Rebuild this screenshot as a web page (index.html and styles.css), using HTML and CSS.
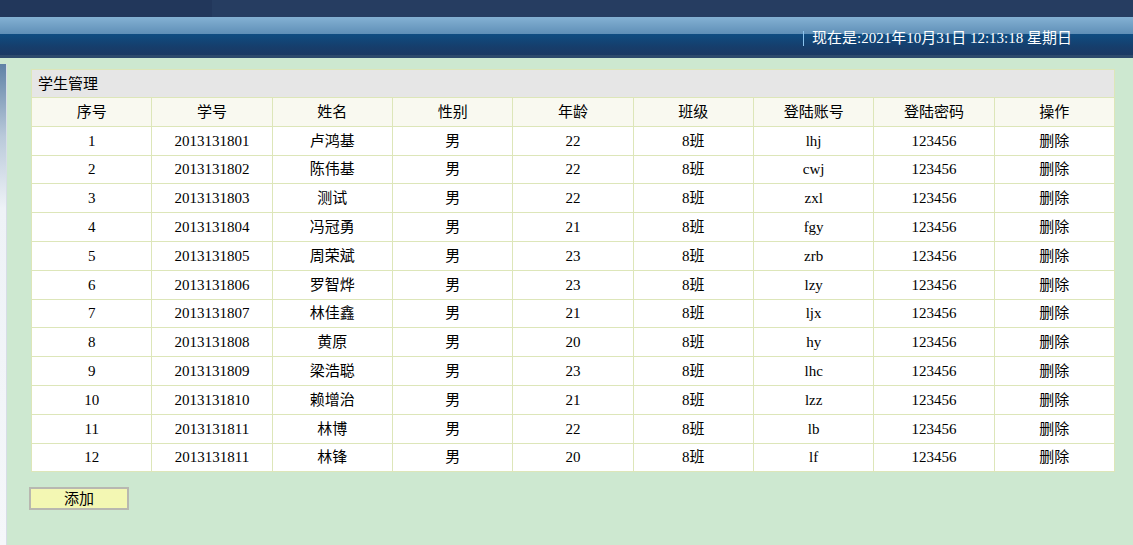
FILE: index.html
```html
<!DOCTYPE html>
<html lang="zh">
<head>
<meta charset="utf-8">
<title>学生管理</title>
<link rel="stylesheet" href="styles.css">
</head>
<body>
<div class="top">
  <div class="top-band"><div class="top-left"></div></div>
  <div class="nav">
    <div class="nav-light"></div>
    <div class="nav-dark">
      <span class="clock"><span class="sep"></span>现在是:2021年10月31日 12:13:18 星期日</span>
    </div>
    <div class="nav-edge"></div>
  </div>
</div>
<div class="main">
  <div class="strip"></div>
  <div class="content">
    <table class="grid">
      <tr class="title-row"><td colspan="9">学生管理</td></tr>
      <tr class="head-row">
        <td>序号</td><td>学号</td><td>姓名</td><td>性别</td><td>年龄</td><td>班级</td><td>登陆账号</td><td>登陆密码</td><td>操作</td>
      </tr>
      <tr><td>1</td><td>2013131801</td><td>卢鸿基</td><td>男</td><td>22</td><td>8班</td><td>lhj</td><td>123456</td><td>删除</td></tr>
      <tr><td>2</td><td>2013131802</td><td>陈伟基</td><td>男</td><td>22</td><td>8班</td><td>cwj</td><td>123456</td><td>删除</td></tr>
      <tr><td>3</td><td>2013131803</td><td>测试</td><td>男</td><td>22</td><td>8班</td><td>zxl</td><td>123456</td><td>删除</td></tr>
      <tr><td>4</td><td>2013131804</td><td>冯冠勇</td><td>男</td><td>21</td><td>8班</td><td>fgy</td><td>123456</td><td>删除</td></tr>
      <tr><td>5</td><td>2013131805</td><td>周荣斌</td><td>男</td><td>23</td><td>8班</td><td>zrb</td><td>123456</td><td>删除</td></tr>
      <tr><td>6</td><td>2013131806</td><td>罗智烨</td><td>男</td><td>23</td><td>8班</td><td>lzy</td><td>123456</td><td>删除</td></tr>
      <tr><td>7</td><td>2013131807</td><td>林佳鑫</td><td>男</td><td>21</td><td>8班</td><td>ljx</td><td>123456</td><td>删除</td></tr>
      <tr><td>8</td><td>2013131808</td><td>黄原</td><td>男</td><td>20</td><td>8班</td><td>hy</td><td>123456</td><td>删除</td></tr>
      <tr><td>9</td><td>2013131809</td><td>梁浩聪</td><td>男</td><td>23</td><td>8班</td><td>lhc</td><td>123456</td><td>删除</td></tr>
      <tr><td>10</td><td>2013131810</td><td>赖增治</td><td>男</td><td>21</td><td>8班</td><td>lzz</td><td>123456</td><td>删除</td></tr>
      <tr><td>11</td><td>2013131811</td><td>林博</td><td>男</td><td>22</td><td>8班</td><td>lb</td><td>123456</td><td>删除</td></tr>
      <tr><td>12</td><td>2013131811</td><td>林锋</td><td>男</td><td>20</td><td>8班</td><td>lf</td><td>123456</td><td>删除</td></tr>
    </table>
    <button class="add-btn" type="button">添加</button>
  </div>
</div>
</body>
</html>
```

FILE: styles.css
```css
html, body {
  margin: 0;
  padding: 0;
}
body {
  width: 1133px;
  height: 545px;
  overflow: hidden;
  background: #cde8d0;
  font-family: "Liberation Serif", "Noto Sans CJK SC", serif;
  font-size: 15px;
  color: #000;
}
.top {
  height: 58px;
  display: flex;
  flex-direction: column;
}
.top-band {
  height: 17px;
  background: #263d61;
  display: flex;
}
.top-left {
  width: 212px;
  background: #22375b;
}
.nav {
  height: 41px;
  display: flex;
  flex-direction: column;
}
.nav-light {
  height: 17px;
  background: linear-gradient(#84b1d3, #5f8fb7);
}
.nav-dark {
  height: 21px;
  background: linear-gradient(#0f4d82, #163e6c 60%, #1b3963);
  display: flex;
  justify-content: flex-end;
  align-items: flex-start;
  padding-right: 61px;
}
.clock {
  color: #fff;
  font-size: 15px;
  line-height: 18px;
  margin-top: -5px;
  display: flex;
  align-items: center;
}
.sep {
  display: inline-block;
  width: 1px;
  height: 15px;
  background: #8cc4ee;
  margin-right: 8px;
}
.nav-edge {
  height: 3px;
  background: #2d4a6c;
}
.main {
  display: flex;
  height: 487px;
}
.strip {
  width: 7px;
  margin-top: 6px;
  background: linear-gradient(#5f82a6, #b9c9da 15%, #eef2f7 30%, #f5f7fa);
  box-shadow: inset -1px 0 0 #d6dde6;
}
.content {
  margin-left: 24px;
  padding-top: 11px;
}
.grid {
  width: 1084px;
  border-collapse: collapse;
  table-layout: fixed;
  background: #fff;
  border: 1px solid #dde6b9;
}
.grid td {
  border: 1px solid #dde6b9;
  text-align: center;
  height: 27.8px;
  padding: 0;
  line-height: 18px;
}
.title-row td {
  background: #e6e6e6;
  text-align: left;
  padding-left: 6px;
  height: 27px;
}
.head-row td {
  background: #f9f9f0;
}
.add-btn {
  display: block;
  margin-top: 15px;
  margin-left: -2px;
  width: 100px;
  height: 23px;
  background: #f3f7b3;
  border: 2px solid #b8b8b0;
  border-style: solid;
  font-family: "Liberation Serif", "Noto Sans CJK SC", serif;
  font-size: 15px;
  color: #000;
  padding: 0;
  line-height: 18px;
}
```
